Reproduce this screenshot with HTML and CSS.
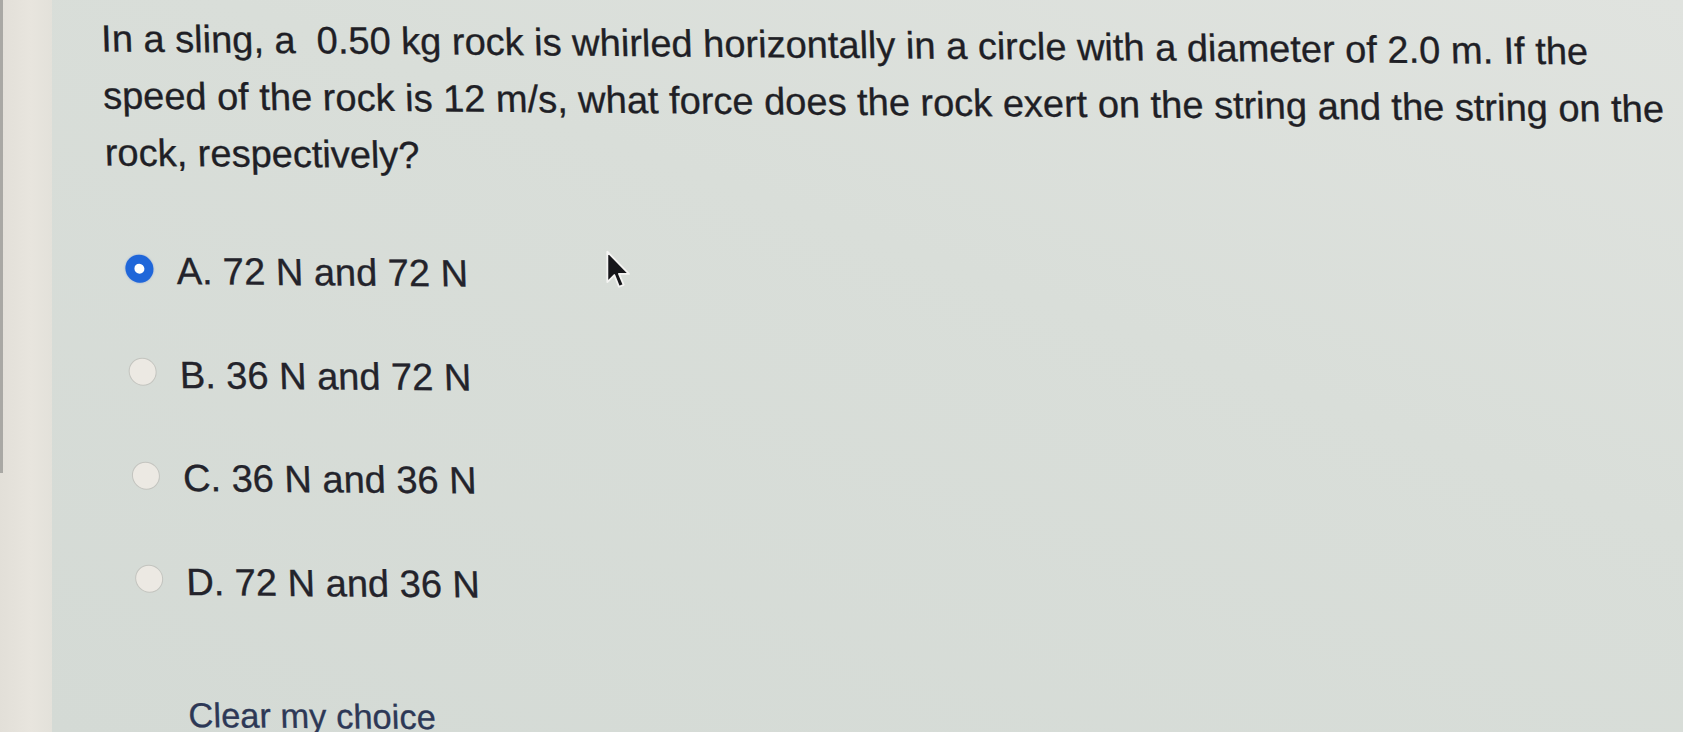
FILE: index.html
```html
<!DOCTYPE html>
<html lang="en">
<head>
<meta charset="utf-8">
<title>Question</title>
<link rel="stylesheet" href="styles.css">
</head>
<body>
<div class="screen">
  <div class="edge"><div class="edge-line"></div></div>
  <main class="panel">
    <div class="content">
      <p class="question">In a sling, a&nbsp; 0.50 kg rock is whirled horizontally in a circle with a diameter of 2.0 m. If the speed of the rock is 12 m/s, what force does the rock exert on the string and the string on the rock, respectively?</p>
      <div class="answers">
        <label class="option"><span class="radio checked"></span><span class="opt-text">A. 72 N and 72 N</span></label>
        <label class="option"><span class="radio"></span><span class="opt-text">B. 36 N and 72 N</span></label>
        <label class="option"><span class="radio"></span><span class="opt-text">C. 36 N and 36 N</span></label>
        <label class="option"><span class="radio"></span><span class="opt-text">D. 72 N and 36 N</span></label>
      </div>
      <a class="clear">Clear my choice</a>
    </div>
    <svg class="cursor" width="28" height="42" viewBox="0 0 24 36" aria-hidden="true">
      <path d="M2 1.5 L2 27.5 L8 21.5 L12 31.5 L16 29.8 L12 20.5 L20.5 20.5 Z" fill="#16161a" stroke="#f4f4f2" stroke-width="1.6" stroke-linejoin="round"/>
    </svg>
  </main>
</div>
</body>
</html>
```

FILE: styles.css
```css
html, body {
  margin: 0;
  padding: 0;
}

body {
  font-family: "Liberation Sans", Arial, sans-serif;
  background: #d7dcd7;
}

.screen {
  display: flex;
  width: 1683px;
  height: 732px;
  overflow: hidden;
}

.edge {
  flex: none;
  width: 52px;
  background: linear-gradient(90deg, #e2dfd8 0%, #e8e5de 60%, #e3e1da 100%);
}

.edge-line {
  width: 3px;
  height: 473px;
  background: #a9a8a4;
}

.panel {
  flex: 1;
  position: relative;
  background: linear-gradient(200deg, #e0e3df 0%, #d9ded9 40%, #d4dad5 100%);
}

.content {
  padding: 10px 0 0 48px;
  transform: skew(1.8deg, 0.5deg);
  transform-origin: 0 0;
}

.question {
  margin: 0;
  width: 1580px;
  font-size: 38px;
  line-height: 57px;
  color: #1f1f26;
  -webkit-text-stroke: 0.35px #1f1f26;
}

.answers {
  display: flex;
  flex-direction: column;
  gap: 46.5px;
  margin-top: 61px;
}

.option {
  display: flex;
  align-items: flex-start;
  gap: 23.5px;
  padding-left: 16.5px;
  height: 57px;
  font-size: 38px;
  line-height: 57px;
  color: #23232b;
  -webkit-text-stroke: 0.35px #23232b;
}

.radio {
  flex: none;
  box-sizing: border-box;
  width: 28px;
  height: 28px;
  margin-top: 11.5px;
  border-radius: 50%;
  background: #ece9e3;
  border: 1.5px solid #c3c4bf;
}

.radio.checked {
  background: #ffffff;
  border: 9.5px solid #1f66d9;
  box-shadow: 0 0 2px rgba(60, 110, 220, 0.5);
}

.clear {
  display: block;
  margin-top: 79.5px;
  padding-left: 66px;
  font-size: 34.5px;
  line-height: 50px;
  color: #2d3856;
  -webkit-text-stroke: 0.3px #2d3856;
  text-decoration: none;
}

.cursor {
  position: absolute;
  left: 553px;
  top: 250px;
}
```
